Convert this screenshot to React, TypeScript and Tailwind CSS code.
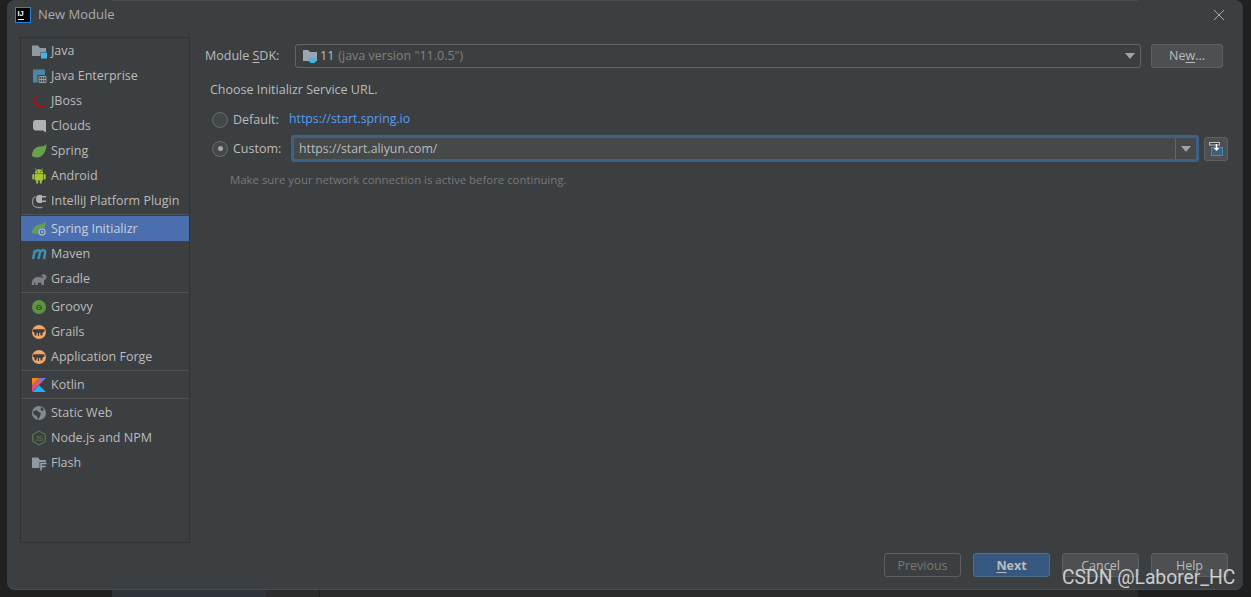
import React from "react";

const Leaf = () => (
  <svg width="16" height="16" viewBox="0 0 16 16">
    <path d="M15.500 1C15.700 8 12 14 6.500 14.500 3.500 14.700 1.700 13.700 1 12.800 .8 7.500 4.500 3.800 9 3.500 12 3.300 14 3 15.500 1Z" fill="#6a9f4b" />
  </svg>
);
const Folder = () => <path d="M1 2.500h6l2 2.500h6v8H1Z" fill="#8d9aa3" />;
const Grail = () => (
  <svg width="16" height="16" viewBox="0 0 16 16">
    <circle cx="8" cy="8" r="7" fill="#f4a460" />
    <path d="M2.500 5.300h11v2.500l-1.700.4-.7 3.300h-1.500l-.4-2.800-1 .1-.2 3.200H7l-.2-3.200-1-.1-.4 2.800H3.900l-.7-3.300-1.700-.4Z" fill="#3c3f41" />
  </svg>
);

const jbossDots: [number, number, number, string][] = [
  [12.300, 1, 0.600, "#a81818"],
  [8.300, 1.800, 0.700, "#b81414"],
  [5.300, 3, 0.800, "#c81010"],
  [3.200, 5.200, 0.800, "#d00808"],
  [2.700, 7.800, 0.900, "#d80000"],
  [3.300, 10, 1, "#e00000"],
  [5.300, 12, 1.100, "#e00000"],
  [8.300, 13.200, 1.200, "#e00000"],
  [12, 13.500, 1.400, "#e00000"],
];

const icons: Record<string, React.ReactNode> = {
  Java: (
    <svg width="16" height="16" viewBox="0 0 16 16">
      <Folder />
      <rect x="9.500" y="9" width="6.500" height="6.500" fill="#3c3f41" />
      <rect x="10" y="9.500" width="6" height="6" fill="#40b6e0" />
    </svg>
  ),
  "Java Enterprise": (
    <svg width="16" height="16" viewBox="0 0 16 16">
      <rect x="2" y="1.500" width="12" height="13" fill="#4d87a6" />
      <rect x="6.500" y="7" width="9.500" height="8.500" fill="#3c3f41" />
      <path d="M8 8.500h7v6H8ZM10.300 8.500v6M12.700 8.500v6M8 11.500h7" fill="none" stroke="#9aa7b0" strokeWidth="0.900" />
    </svg>
  ),
  JBoss: (
    <svg width="16" height="16" viewBox="0 0 16 16">
      {jbossDots.map(([x, y, r, c], i) => (
        <circle key={i} cx={x} cy={y} r={r} fill={c} />
      ))}
    </svg>
  ),
  Clouds: (
    <svg width="16" height="16" viewBox="0 0 16 16">
      <path d="M5 2h8.500c1 0 1.500.5 1.500 1.500V14.500L12 12.500H5C3 12.500 2 11.500 2 9.500V5c0-2 1-3 3-3Z" fill="#afb1b3" />
    </svg>
  ),
  Spring: <Leaf />,
  Android: (
    <svg width="16" height="16" viewBox="0 0 16 16" fill="#a4c439">
      <path d="M3.800 5.500a4.200 4.200 0 0 1 8.400 0Z" />
      <path d="M5.300 2 4.500 .6M10.700 2l.8-1.400" stroke="#a4c439" strokeWidth="0.800" />
      <rect x="3.800" y="6" width="8.400" height="6.500" rx="0.800" />
      <rect x="1.300" y="6" width="2" height="5.500" rx="1" />
      <rect x="12.700" y="6" width="2" height="5.500" rx="1" />
      <rect x="5.200" y="12" width="2" height="3.700" rx="1" />
      <rect x="8.800" y="12" width="2" height="3.700" rx="1" />
      <circle cx="6.300" cy="3.600" r="0.600" fill="#3c3f41" />
      <circle cx="9.700" cy="3.600" r="0.600" fill="#3c3f41" />
    </svg>
  ),
  "IntelliJ Platform Plugin": (
    <svg width="16" height="16" viewBox="0 0 16 16" fill="none">
      <path d="M8 2h3v8H8C6 10 5 8.500 5 6s1-4 3-4Z" fill="#afb1b3" />
      <path d="M11 3.800h4M11 8.200h4" stroke="#afb1b3" strokeWidth="1.500" />
      <path d="M4.500 3.500C2.500 4.500 1.500 6.500 1.500 9s1.500 5.500 5 5.500h5" stroke="#8f9193" strokeWidth="1.300" />
    </svg>
  ),
  "Spring Initializr": (
    <svg width="16" height="16" viewBox="0 0 16 16">
      <path d="M14.500 .5C14.500 5 13.500 11 7.500 12.500 4.500 13.200 2 12.800 1 12 1 7.500 4.500 3.800 8.500 3.500 11 3.300 13 2.500 14.500 .5Z" fill="#62a04f" />
      <circle cx="11" cy="11" r="4.300" fill="#6d86ab" />
      <circle cx="11" cy="11" r="3" fill="#4b6eaf" stroke="#b9c7d6" strokeWidth="1" />
      <circle cx="11" cy="11" r="1" fill="#b9c7d6" />
    </svg>
  ),
  Maven: (
    <svg width="16" height="16" viewBox="0 0 16 16" fill="none">
      <path d="M2 13 3.900 4M3.700 6.500C5 3.800 9.300 3.500 8.900 6.500L7.500 13M9 6.500C10 3.800 14.900 3.500 14.200 6.500L12.900 13" stroke="#3f8fb0" strokeWidth="2.500" />
    </svg>
  ),
  Gradle: (
    <svg width="16" height="16" viewBox="0 0 16 16">
      <path d="M.8 14C.5 9 3 6 7 6c2.500 0 4 1.300 5.300.3.700-.6-.1-1.300-.7-.9-.8.500-1.500-.7-.8-1.500 1.100-1.100 4-.9 4.600.9.600 2.100-1 3.900-2.400 4.600V14h-2.600v-2.500c-1.300.3-2.500.3-3.600 0V14H4.200v-2.600l-1 .4V14Z" fill="#7d8185" />
    </svg>
  ),
  Groovy: (
    <svg width="16" height="16" viewBox="0 0 16 16">
      <circle cx="8" cy="8" r="7" fill="#5e9441" />
      <text x="8" y="11" textAnchor="middle" fontSize="8" fontWeight="700" fill="#2f4c20" fontFamily="'Liberation Sans', sans-serif">G</text>
    </svg>
  ),
  Grails: <Grail />,
  "Application Forge": <Grail />,
  Kotlin: (
    <svg width="16" height="16" viewBox="0 0 16 16">
      <defs>
        <linearGradient id="kband" x1="1" y1="12" x2="13" y2="1" gradientUnits="userSpaceOnUse">
          <stop offset="0" stopColor="#e0488a" />
          <stop offset="0.550" stopColor="#d85a70" />
          <stop offset="1" stopColor="#5a7cf0" />
        </linearGradient>
      </defs>
      <path d="M1 1h7L1 8.500Z" fill="#f88909" />
      <path d="M8 1h7L1 15V8.500Z" fill="url(#kband)" />
      <path d="M8 8.300 15 15H1.500Z" fill="#1fb0f5" />
    </svg>
  ),
  "Static Web": (
    <svg width="16" height="16" viewBox="0 0 16 16">
      <circle cx="8" cy="8" r="7" fill="#7f8b91" />
      <path d="M1.800 6.500 5.500 5 7.500 7l2.500 1-1.200 3.500L7.500 14.500l-2-3.500L3 9.500ZM10 2l3.200 2.500L11.500 6 9.500 5Z" fill="#3c3f41" />
    </svg>
  ),
  "Node.js and NPM": (
    <svg width="16" height="16" viewBox="0 0 16 16">
      <path d="M8 1 14.200 4.500v7L8 15 1.800 11.500v-7Z" fill="none" stroke="#59864a" strokeWidth="1" />
      <text x="8" y="10.500" textAnchor="middle" fontSize="6.500" fill="#59864a" fontFamily="'Liberation Sans', sans-serif">JS</text>
    </svg>
  ),
  Flash: (
    <svg width="16" height="16" viewBox="0 0 16 16">
      <Folder />
      <rect x="8.500" y="7" width="7.500" height="9" fill="#3c3f41" />
      <path d="M15.500 8.500h-5.500v7M10 11.500h4.500" stroke="#9aa7b0" strokeWidth="1.400" fill="none" />
    </svg>
  ),
};

const groups = [
  ["Java", "Java Enterprise", "JBoss", "Clouds", "Spring", "Android", "IntelliJ Platform Plugin"],
  ["Spring Initializr", "Maven", "Gradle"],
  ["Groovy", "Grails", "Application Forge"],
  ["Kotlin"],
  ["Static Web", "Node.js and NPM", "Flash"],
];

const Row = ({ name }: { name: string }) => (
  <div
    className={`flex h-[25px] items-center gap-[4px] pl-[10px] ${
      name === "Spring Initializr" ? "bg-[#4b6eaf] text-[#c9d2dc]" : "text-[#bbbbbb]"
    }`}
  >
    <span className="flex h-4 w-4 shrink-0 items-center justify-center">{icons[name]}</span>
    <span className="pt-[2px]">{name}</span>
  </div>
);

const Caret = () => (
  <svg width="12" height="6" viewBox="0 0 12 6">
    <path d="M1 0h10L6 6Z" fill="#a0a2a4" />
  </svg>
);

const Radio = ({ checked }: { checked?: boolean }) => (
  <span className="flex h-[16px] w-[16px] shrink-0 items-center justify-center rounded-full border border-[#6b6b6b] bg-[#43494a]">
    {checked && <span className="h-[5px] w-[5px] rounded-full bg-[#a7a7a7]" />}
  </span>
);

const FootBtn = ({ children, cls }: { children: React.ReactNode; cls: string }) => (
  <div className={`flex h-[24px] w-[77px] items-center justify-center rounded-[3px] border pt-[3px] ${cls}`}>{children}</div>
);

export default function App() {
  return (
    <div
      className="relative h-[597px] w-[1251px] overflow-hidden bg-[#202020] pl-[7px] text-[12.5px] text-[#bbbbbb]"
      style={{ fontFamily: "'Open Sans', 'Noto Sans', sans-serif" }}
    >
      <div className="flex h-[590px] w-[1236px] flex-col rounded-[8px] border-b border-[#4a4d4f] bg-[#3c3f41]">
        {/* window edge showing along the top */}
        <div className="ml-[105px] h-px w-[1026px] shrink-0 bg-[#4a4d4f]" />

        {/* title bar */}
        <div className="flex h-[28px] shrink-0 items-center pl-[8px] pr-[18px]">
          <svg width="16" height="16" viewBox="0 0 16 16" className="shrink-0">
            <rect x="0.500" y="0.500" width="15" height="15" fill="#000" stroke="#1f84e8" />
            <text x="2.500" y="9" fontSize="7.500" fontWeight="700" fill="#fff" fontFamily="'Liberation Sans', sans-serif">IJ</text>
            <rect x="3" y="12" width="6" height="1" fill="#fff" />
          </svg>
          <span className="ml-[7px] text-[13px] text-[#a9abad]">New Module</span>
          <svg width="12" height="12" viewBox="0 0 12 12" className="ml-auto">
            <path d="M1 1l10 10M11 1 1 11" stroke="#a9abad" strokeWidth="1" />
          </svg>
        </div>

        <div className="flex min-h-0 flex-1 pl-[13px] pr-[15px]">
          {/* sidebar */}
          <div className="mt-[8px] h-[506px] w-[170px] shrink-0 border border-[#323232]">
            {groups.map((g, i) => (
              <div key={i} className={i > 0 ? "mt-px border-t border-[#515151] pt-px" : ""}>
                {g.map((n) => (
                  <Row key={n} name={n} />
                ))}
              </div>
            ))}
          </div>

          {/* main panel */}
          <div className="flex min-w-0 flex-1 flex-col pl-[15px]">
            <div className="mt-[15px] flex items-center">
              <span className="w-[90px] shrink-0">
                Module <span className="underline underline-offset-2">S</span>DK:
              </span>
              <div className="flex h-[24px] w-[846px] items-center rounded-[3px] border border-[#646464] bg-[#3c3f41] pl-[6px] pr-[4px]">
                <svg width="16" height="16" viewBox="0 0 16 16" className="shrink-0">
                  <path d="M1 2h5l2 2h7v9H1Z" fill="#9aa7b0" />
                  <path d="M7 10h7v2.500c0 1.500-1 2.500-2.500 2.500h-2C8 15 7 14 7 12.500Z" fill="#40b6e0" />
                </svg>
                <span className="ml-[2px] text-[#bbbbbb]">11</span>
                <span className="ml-[4px] text-[#808080]">(java version "11.0.5")</span>
                <span className="ml-auto flex"><Caret /></span>
              </div>
              <div className="ml-[10px] flex h-[24px] w-[72px] items-center justify-center rounded-[3px] border border-[#5e6060] bg-[#4c5052]">
                Ne<span className="underline underline-offset-2">w</span>...
              </div>
            </div>

            <div className="ml-[5px] mt-[13px] h-[18px] leading-[18px]">Choose Initializr Service URL.</div>

            <div className="ml-[7px] mt-[10px] flex h-[22px] items-center">
              <Radio />
              <span className="ml-[5px] w-[56px]">Default:</span>
              <span className="pb-[2px] text-[12.3px] text-[#589df6]">https://start.spring.io</span>
            </div>

            <div className="ml-[7px] mt-[4px] flex h-[27px] items-center">
              <Radio checked />
              <span className="ml-[5px] w-[58px] pt-[2px]">Custom:</span>
              <div className="flex h-[27px] w-[908px] items-center rounded-[3px] border-[3px] border-[#3d6185] bg-[#45494a]">
                <span className="flex-1 pl-[5px] pt-[2px] text-[12.3px] text-[#bbbbbb]">https://start.aliyun.com/</span>
                <span className="flex h-full w-[21px] items-center justify-center border-l border-[#646464]"><Caret /></span>
              </div>
              <div className="ml-[5px] flex h-[24px] w-[24px] shrink-0 items-center justify-center rounded-[3px] border border-[#5e6060] bg-[#4c5052]">
                <svg width="16" height="16" viewBox="0 0 16 16">
                  <rect x="1.500" y="1.500" width="10" height="2.500" fill="#3c3f41" stroke="#bfbfbf" />
                  <rect x="3.500" y="6.500" width="11" height="8" fill="#3d5f7a" stroke="#3592c4" />
                  <path d="M8.500 3v5" stroke="#fff" strokeWidth="1.600" />
                  <path d="M5.500 7h6l-3 3Z" fill="#fff" />
                </svg>
              </div>
            </div>

            <div className="ml-[25px] mt-[10px] text-[11.4px] leading-[16px] text-[#787878]">Make sure your network connection is active before continuing.</div>

            <div className="mt-auto mb-[12px] flex justify-end gap-[12px]">
              <FootBtn cls="border-[#5e6060] text-[#777777]">Previous</FootBtn>
              <FootBtn cls="border-[#4c708c] bg-[#365880] font-bold text-[#bbbbbb]">
                <span><span className="underline underline-offset-2">N</span>ext</span>
              </FootBtn>
              <FootBtn cls="border-[#5e6060] bg-[#4c5052]">Cancel</FootBtn>
              <FootBtn cls="border-[#5e6060] bg-[#4c5052]">Help</FootBtn>
            </div>
          </div>
        </div>
      </div>

      {/* strip of the window beneath the dialog */}
      <div className="-ml-[7px] flex h-[7px] w-[1251px]">
        <div className="w-[112px] bg-[#202020]" />
        <div className="w-[154px] bg-[#2e3239]" />
        <div className="w-[54px] border-r border-[#1e1e1e] bg-[#2b2b2b]" />
        <div className="w-[818px] bg-[#2b2b2b]" />
        <div className="flex-1 bg-[#1e1e1e]" />
      </div>

      {/* watermark */}
      <div
        className="absolute left-[1062px] top-[566px] text-[19.3px] leading-[24px] text-[#e6e6e6]/85"
        style={{ fontFamily: "'Roboto', sans-serif" }}
      >
        CSDN @Laborer_HC
      </div>
    </div>
  );
}
